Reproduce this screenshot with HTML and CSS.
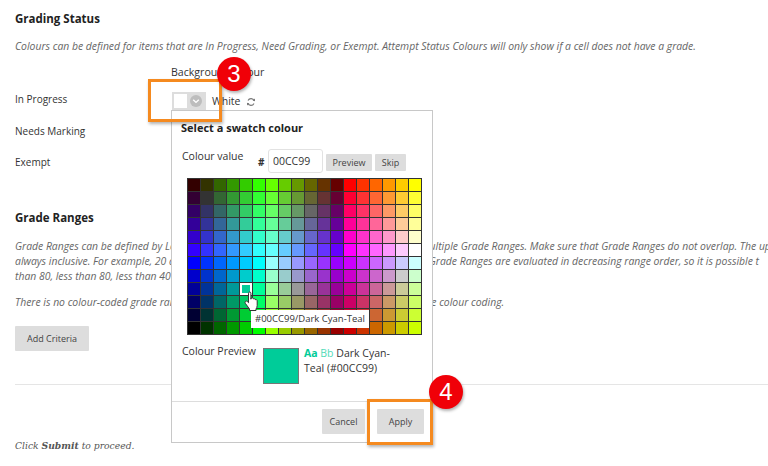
FILE: index.html
```html
<!DOCTYPE html>
<html lang="en">
<head>
    <meta charset="UTF-8">
    <title>Grading Status</title>
    <link rel="stylesheet" href="styles.css">
</head>
<body>
    <div class="pagina">
        <h2 class="titulo">Grading Status</h2>
        <p class="ayuda ayuda-estado">Colours can be defined for items that are In Progress, Need Grading, or Exempt. Attempt Status Colours will only show if a cell does not have a grade.</p>

        <div class="tabla-estado">
            <div class="cabecera-color">Background colour</div>
            <div class="fila-estado">
                <span>In Progress</span>
                <div class="selector">
                    <span class="selector-caja">
                        <span class="selector-blanco"></span>
                        <svg class="selector-flecha" width="12" height="12" viewBox="0 0 12 12">
                            <circle cx="6" cy="6" r="6" fill="#bdbdbd"/>
                            <path d="M3.2 4.8 6 7.4 8.8 4.8" fill="none" stroke="#fff" stroke-width="1.4"/>
                        </svg>
                    </span>
                    <span class="selector-nombre">White</span>
                    <svg class="selector-recargar" width="10" height="10" viewBox="0 0 10 10">
                        <path d="M2 3.5A3.4 3.4 0 0 1 8.2 3.8M8 6.5A3.4 3.4 0 0 1 1.8 6.2" fill="none" stroke="#777" stroke-width="1.1"/>
                        <path d="M6.6 3.6 9 4.2 9 1.6ZM3.4 6.4 1 5.8 1 8.4Z" fill="#777"/>
                    </svg>
                </div>
            </div>
            <div class="fila-estado"><span>Needs Marking</span></div>
            <div class="fila-estado"><span>Exempt</span></div>
        </div>

        <h2 class="titulo titulo-rangos">Grade Ranges</h2>
        <p class="ayuda ayuda-rangos">
            <span class="linea">Grade Ranges can be defined by Letter, Percent or Score, and a sole cell can be in one of multiple Grade Ranges. Make sure that Grade Ranges do not overlap. The up</span>
            <span class="linea">always inclusive. For example, 20 and 40 can both be entered as limits on range of scores. Grade Ranges are evaluated in decreasing range order, so it is possible t</span>
            <span class="linea">than 80, less than 80, less than 40 and so on.</span>
        </p>
        <p class="ayuda ayuda-nota">There is no colour-coded grade range set by default, and add one or more criteria to use the colour coding.</p>
        <button class="boton boton-criterio">Add Criteria</button>
        <hr class="separador">
        <p class="enviar">Click <b>Submit</b> to proceed.</p>
    </div>

    <!-- Ventana de colores, encima del contenido -->
    <div class="popup">
        <div class="popup-cuerpo">
            <h3 class="popup-titulo">Select a swatch colour</h3>
            <div class="fila-valor">
                <span class="valor-etiqueta">Colour value</span>
                <span class="valor-almohadilla">#</span>
                <input class="valor-campo" value="00CC99">
                <button class="boton boton-mini boton-preview">Preview</button>
                <button class="boton boton-mini">Skip</button>
            </div>
            <div class="muestras" id="muestras"></div>
            <div class="fila-preview">
                <span class="preview-etiqueta">Colour Preview</span>
                <span class="preview-caja"></span>
                <span class="preview-texto"><b class="aa">Aa</b> <span class="bb">Bb</span> Dark Cyan-Teal (#00CC99)</span>
            </div>
        </div>
        <div class="popup-pie">
            <button class="boton boton-pie boton-cancel">Cancel</button>
            <button class="boton boton-pie">Apply</button>
        </div>
    </div>

    <div class="tooltip">#00CC99/Dark Cyan-Teal</div>
    <svg class="mano" width="16" height="22" viewBox="0 0 16 22">
        <path d="M4.500 2.200c0-1.600 2.400-1.600 2.400 0v6l.3-1.200c1.200-.6 2 0 2.100.9.900-.6 1.900-.2 2 .8.900-.4 1.900 0 1.900 1.200v4.600c0 1.600-.6 2.300-1.200 3.500v1.500H5.500v-1.500L1.300 12.300c-1-1.500.8-3 2-1.800l1.200 1.200Z" fill="#fff" stroke="#333" stroke-width="1"/>
    </svg>

    <!-- Marcas naranjas y numeros -->
    <div class="marco marco-3"></div>
    <div class="marco marco-4"></div>
    <div class="numero numero-3">3</div>
    <div class="numero numero-4">4</div>

    <script src="swatches.js"></script>
</body>
</html>
```

FILE: styles.css
```css
html { font-size: 10px; }
body {
    font-family: "Open Sans", Arial, sans-serif;
    margin: 0;
    background: #fff;
    color: #333;
    width: 768px;
    height: 466px;
    overflow: hidden;
    position: relative;
}
.pagina {
    padding: 11px 0 0 15px;
    font-size: 1rem;
}
.titulo {
    margin: 0;
    font-size: 1.15rem;
    line-height: 15px;
    font-weight: bold;
    color: #222;
}
.ayuda {
    margin: 0;
    font-style: italic;
    color: #666;
    font-size: 1.04rem;
    line-height: 15px;
    white-space: nowrap;
}
.ayuda-estado { margin-top: 13px; }
.linea { display: block; }

.tabla-estado { margin-top: 11px; }
.cabecera-color {
    margin: 0 0 4px 156px;
    line-height: 15px;
    font-size: 1.06rem;
}
.fila-estado {
    display: flex;
    align-items: center;
    height: 31.5px;
    line-height: 15px;
}
.fila-estado > span:first-child { width: 157px; }
.selector {
    display: flex;
    align-items: center;
    margin-top: 2px;
}
.selector-caja {
    display: flex;
    align-items: center;
    gap: 3px;
    width: 34px;
    height: 18px;
    padding-left: 2px;
    box-sizing: border-box;
    background: #ddd;
}
.selector-blanco {
    width: 13px;
    height: 14px;
    background: #fff;
}
.selector-nombre {
    margin: 2px 6px 0 6px;
    font-size: 1.05rem;
}
.selector-recargar { margin-top: 2px; }

.titulo-rangos { margin-top: 31px; }
.ayuda-rangos { margin-top: 14px; }
.ayuda-nota { margin-top: 11px; }
.boton {
    font-family: "Open Sans", Arial, sans-serif;
    background: #ddd;
    color: #444;
    border: none;
    font-size: 0.9rem;
    padding: 0;
    border-radius: 1px;
}
.boton-criterio {
    display: block;
    margin-top: 16px;
    width: 74px;
    height: 25px;
}
.separador {
    margin: 33px 0 0 0;
    border: none;
    border-top: 1px solid #e5e5e5;
}
.enviar {
    margin: 53px 0 0 0;
    font-family: "DejaVu Serif", "Liberation Serif", serif;
    font-style: italic;
    font-size: 0.92rem;
    line-height: 15px;
    color: #555;
}

/* Ventana de colores */
.popup {
    position: absolute;
    left: 171px;
    top: 110px;
    width: 260px;
    height: 331px;
    background: #fff;
    border: 1px solid #c8c8c8;
    display: flex;
    flex-direction: column;
    justify-content: space-between;
}
.popup-cuerpo { padding: 10px 9px 0 10px; }
.popup-titulo {
    margin: 0 0 0 -1px;
    font-size: 1.1rem;
    line-height: 14px;
    font-weight: bold;
    color: #222;
}
.fila-valor {
    display: flex;
    align-items: center;
    margin-top: 14px;
    height: 24px;
}
.valor-etiqueta { width: 76px; font-size: 1.05rem; margin-top: -10px; }
.valor-almohadilla { width: 10px; font-weight: bold; margin-top: 2px; }
.valor-campo {
    font-family: "Open Sans", Arial, sans-serif;
    font-size: 1.05rem;
    color: #333;
    box-sizing: border-box;
    width: 55px;
    height: 24px;
    padding: 0 4px;
    border: 1px solid #e2e2e2;
    border-radius: 3px;
}
.boton-mini {
    height: 17px;
    width: 31px;
    margin-left: 3px;
    margin-top: 2px;
}
.boton-preview { width: 46px; }
.muestras {
    display: grid;
    grid-template-columns: repeat(18, 12px);
    grid-auto-rows: 12px;
    gap: 1px;
    padding: 1px;
    background: #333;
    width: max-content;
    margin: 5px 0 0 5px;
}
.muestra { display: block; }
.muestra-activa {
    outline: 2px solid #fff;
    outline-offset: -2px;
}
.fila-preview {
    display: flex;
    margin-top: 13px;
    font-size: 1.05rem;
    line-height: 15px;
}
.preview-etiqueta { width: 81px; margin-top: -4px; }
.preview-caja {
    width: 36px;
    height: 36px;
    box-sizing: border-box;
    background: #00cc99;
    border: 1px solid #777;
    flex: none;
}
.preview-texto {
    margin: -2px 0 0 5px;
    width: 100px;
}
.aa { color: #00cc99; }
.bb { color: #00cc99; opacity: 0.7; }
.popup-pie {
    box-sizing: border-box;
    border-top: 1px solid #ddd;
    height: 41px;
    display: flex;
    justify-content: flex-end;
    align-items: flex-start;
    padding: 7px 8px 0 0;
}
.boton-pie {
    width: 47px;
    height: 25px;
}
.boton-cancel {
    width: 43px;
    margin-right: 12px;
}

/* Cosas que van encima */
.tooltip {
    position: absolute;
    left: 251px;
    top: 310px;
    width: 118px;
    height: 18px;
    line-height: 18px;
    text-align: center;
    background: #fff;
    font-size: 0.95rem;
    color: #333;
}
.mano {
    position: absolute;
    left: 244px;
    top: 291px;
}
.marco {
    position: absolute;
    box-sizing: border-box;
    border: 3px solid #f58a1f;
    box-shadow: 1px 2px 3px rgba(0,0,0,0.3);
}
.marco-3 { left: 148px; top: 79px; width: 74px; height: 43px; }
.marco-4 { left: 367px; top: 399px; width: 66px; height: 46px; }
.numero {
    position: absolute;
    width: 34px;
    height: 34px;
    line-height: 34px;
    border-radius: 50%;
    background: #f00008;
    color: #fff;
    font-family: "Liberation Sans", Arial, sans-serif;
    font-size: 24px;
    text-align: center;
    box-shadow: 1px 2px 3px rgba(0,0,0,0.3);
}
.numero-3 { left: 217px; top: 57px; }
.numero-4 { left: 429px; top: 375px; }
```

FILE: swatches.js
```js
// Paleta web: 18 columnas x 12 filas, en dos mitades
const contenedor = document.getElementById('muestras');
const niveles = ['00', '33', '66', '99', 'CC', 'FF'];
const verdes = [0, 1, 2, 3, 4, 5, 5, 4, 3, 2, 1, 0, 0, 1, 2, 3, 4, 5];

for (let fila = 0; fila < 12; fila++) {
    const arriba = fila < 6;
    const rojos = arriba ? ['33', '66', 'FF'] : ['00', '99', 'CC'];
    const azul = niveles[arriba ? fila : 11 - fila];
    for (let col = 0; col < 18; col++) {
        const color = '#' + rojos[Math.floor(col / 6)] + niveles[verdes[col]] + azul;
        const celda = document.createElement('span');
        celda.className = 'muestra';
        if (color === '#00CC99') {
            celda.className += ' muestra-activa';
        }
        celda.style.background = color;
        contenedor.appendChild(celda);
    }
}
```
